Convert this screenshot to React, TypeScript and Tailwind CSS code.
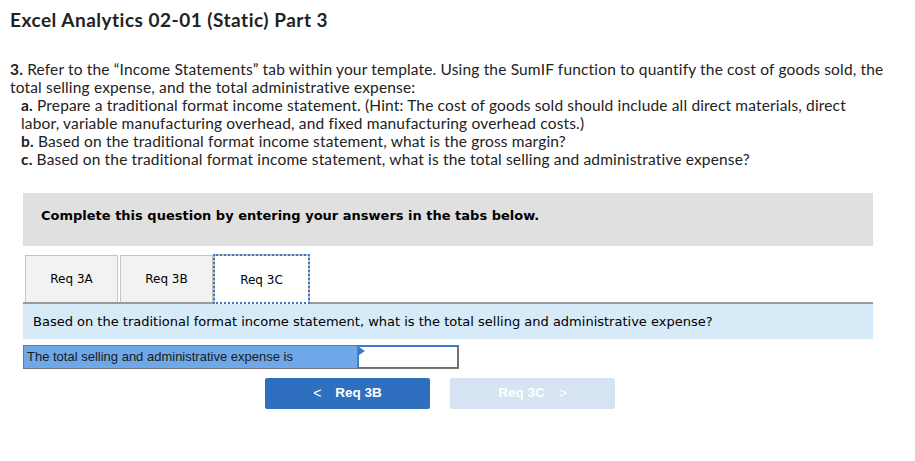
import React from "react";

export default function App() {
  const verdana = { fontFamily: '"DejaVu Sans", Verdana, sans-serif' };
  return (
    <div className="w-[915px] h-[461px] bg-white text-[#1a1a1a] relative overflow-hidden" style={{ fontFamily: 'Lato, "Open Sans", sans-serif' }}>
      <div className="pl-[10px] pt-[9px]">
        <h1 className="text-[19px] font-bold leading-[22px] tracking-[0.5px] text-[#222]">Excel Analytics 02-01 (Static) Part 3</h1>
        <div className="mt-[29px] text-[15.5px] leading-[18px] tracking-[0.16px] text-[#222]">
          <div className="whitespace-nowrap"><b>3.</b> Refer to the “Income Statements” tab within your template. Using the SumIF function to quantify the cost of goods sold, the</div>
          <div className="whitespace-nowrap">total selling expense, and the total administrative expense:</div>
          <div className="pl-[11px]">
            <div className="whitespace-nowrap"><b>a.</b> Prepare a traditional format income statement. (Hint: The cost of goods sold should include all direct materials, direct</div>
            <div className="whitespace-nowrap">labor, variable manufacturing overhead, and fixed manufacturing overhead costs.)</div>
            <div className="whitespace-nowrap"><b>b.</b> Based on the traditional format income statement, what is the gross margin?</div>
            <div className="whitespace-nowrap"><b>c.</b> Based on the traditional format income statement, what is the total selling and administrative expense?</div>
          </div>
        </div>
      </div>

      <div className="ml-[23px] w-[850px] mt-[25px]" style={verdana}>
        <div className="h-[53px] bg-[#e0e0e0] pl-[18px] pt-[15px] leading-[16px] text-[13px] font-bold text-black">
          Complete this question by entering your answers in the tabs below.
        </div>

        <div className="mt-[8px] flex items-end h-[48px] pl-[2px]">
          <div className="w-[93px] h-[47px] bg-[#f2f2f2] border border-[#c4c4c4] border-b-0 flex items-center justify-center text-[12px] text-black">Req 3A</div>
          <div className="w-[93px] h-[47px] ml-[2px] bg-[#f2f2f2] border border-[#c4c4c4] border-b-0 flex items-center justify-center text-[12px] text-black">Req 3B</div>
          <div className="w-[97px] h-[50px] -mb-[2px] relative z-10 bg-white outline-2 outline-dotted outline-[#3a78c9] -outline-offset-2 border-x-2 border-t-2 border-[#c4c4c4] flex items-center justify-center text-[12px] text-black">Req 3C</div>
        </div>
        <div className="border-t-2 border-[#9a9a9a] bg-[#d6eaf8] h-[37px] flex items-center pl-[10px] text-[13px] text-black">
          Based on the traditional format income statement, what is the total selling and administrative expense?
        </div>

        <div className="mt-[6px] flex w-[436px] h-[24px] border border-[#767676]" style={{ fontFamily: '"Liberation Sans", Arial, sans-serif' }}>
          <div className="w-[334px] bg-[#6fa8e8] border-r border-[#767676] flex items-center pl-[3px] text-[13px] text-[#1a1a1a]">The total selling and administrative expense is</div>
          <div className="flex-1 bg-white border border-[#3a78c9] relative">
            <div className="absolute left-0 top-0 w-0 h-0 border-t-[4px] border-b-[4px] border-l-[6px] border-t-transparent border-b-transparent border-l-[#3a78c9]" />
          </div>
        </div>

        <div className="mt-[9px] flex pl-[242px] gap-[20px]" style={{ fontFamily: '"Liberation Sans", Arial, sans-serif' }}>
          <div className="w-[165px] h-[31px] rounded-[2px] bg-[#2f6fbf] flex items-center justify-center text-white text-[13.5px] font-bold">
            <span className="mr-[14px] font-normal text-[14px]">&lt;</span>Req 3B
          </div>
          <div className="w-[165px] h-[31px] rounded-[2px] bg-[#d5e3f2] flex items-center justify-center text-white text-[13.5px] font-bold">
            Req 3C<span className="ml-[14px] font-normal text-[14px]">&gt;</span>
          </div>
        </div>
      </div>
    </div>
  );
}
